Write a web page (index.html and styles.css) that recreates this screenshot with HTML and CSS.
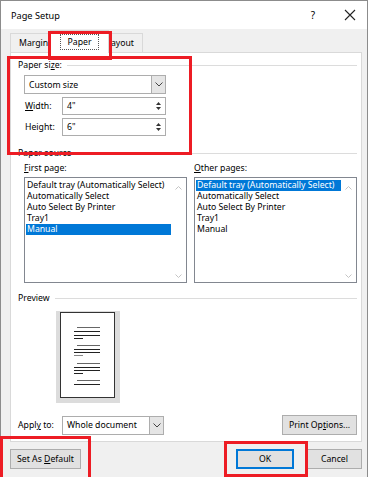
FILE: index.html
```html
<!DOCTYPE html>
<html>
<head>
<meta charset="utf-8">
<link rel="stylesheet" href="styles.css">
</head>
<body>
<div class="dialog">
  <div class="titlebar">
    <span class="title">Page Setup</span>
    <span class="help">?</span>
    <svg class="close" width="12" height="12" viewBox="0 0 12 12"><path d="M1 1L11 11M11 1L1 11" stroke="#222" stroke-width="1.1" fill="none"/></svg>
  </div>
  <div class="tabs">
    <div class="tab tab-margins">Margins</div>
    <div class="tab tab-paper"><span class="focus">Paper</span></div>
    <div class="tab tab-layout">Layout</div>
  </div>
  <div class="panel">
    <div class="group-head"><span>Paper si<u>z</u>e:</span><i></i></div>
    <div class="combo combo-size"><span>Custom size</span><b class="drop"><svg width="8" height="5" viewBox="0 0 8 5"><path d="M0.5 0.5L4 4L7.5 0.5" stroke="#444" fill="none"/></svg></b></div>
    <div class="field-row">
      <label><u>W</u>idth:</label>
      <div class="spin"><span>4"</span><b class="arrows"><svg width="5" height="3" viewBox="0 0 5 3"><path d="M0 3L2.5 0L5 3Z" fill="#333"/></svg><svg width="5" height="3" viewBox="0 0 5 3"><path d="M0 0L2.5 3L5 0Z" fill="#333"/></svg></b></div>
    </div>
    <div class="field-row">
      <label>Hei<u>g</u>ht:</label>
      <div class="spin"><span>6"</span><b class="arrows"><svg width="5" height="3" viewBox="0 0 5 3"><path d="M0 3L2.5 0L5 3Z" fill="#333"/></svg><svg width="5" height="3" viewBox="0 0 5 3"><path d="M0 0L2.5 3L5 0Z" fill="#333"/></svg></b></div>
    </div>
    <div class="group-head source-head"><span>Paper source</span><i></i></div>
    <div class="lists">
      <div class="list-col">
        <div class="list-label"><u>F</u>irst page:</div>
        <div class="listbox">
          <div class="items">
            <div>Default tray (Automatically Select)</div>
            <div>Automatically Select</div>
            <div>Auto Select By Printer</div>
            <div>Tray1</div>
            <div class="sel">Manual</div>
          </div>
          <div class="vscroll"><svg width="7" height="4" viewBox="0 0 7 4"><path d="M0.5 3.5L3.5 0.5L6.5 3.5" stroke="#c4c4c4" fill="none"/></svg><svg width="7" height="4" viewBox="0 0 7 4"><path d="M0.5 0.5L3.5 3.5L6.5 0.5" stroke="#c4c4c4" fill="none"/></svg></div>
        </div>
      </div>
      <div class="list-col">
        <div class="list-label"><u>O</u>ther pages:</div>
        <div class="listbox">
          <div class="items">
            <div class="sel">Default tray (Automatically Select)</div>
            <div>Automatically Select</div>
            <div>Auto Select By Printer</div>
            <div>Tray1</div>
            <div>Manual</div>
          </div>
          <div class="vscroll"><svg width="7" height="4" viewBox="0 0 7 4"><path d="M0.5 3.5L3.5 0.5L6.5 3.5" stroke="#c4c4c4" fill="none"/></svg><svg width="7" height="4" viewBox="0 0 7 4"><path d="M0.5 0.5L3.5 3.5L6.5 0.5" stroke="#c4c4c4" fill="none"/></svg></div>
        </div>
      </div>
    </div>
    <div class="group-head preview-head"><span>Preview</span><i></i></div>
    <div class="preview">
      <div class="page">
        <i class="l1 first"></i><i class="l2"></i><i class="l2"></i><i class="l3 s3"></i>
        <i class="l1 gap"></i><i class="l2"></i><i class="l2 s3"></i><i class="l3 s3 grey"></i>
        <i class="l1 gap2"></i><i class="l2"></i><i class="l2 s3"></i><i class="l3 s3"></i>
        <i class="l1 gap"></i><i class="l2"></i>
      </div>
    </div>
    <div class="apply-row">
      <label>Appl<u>y</u> to:</label>
      <div class="combo combo-apply"><span>Whole document</span><b class="drop"><svg width="8" height="5" viewBox="0 0 8 5"><path d="M0.5 0.5L4 4L7.5 0.5" stroke="#444" fill="none"/></svg></b></div>
      <button class="btn btn-print">Print Op<u>t</u>ions...</button>
    </div>
  </div>
  <div class="footer">
    <button class="btn btn-default">Set As <u>D</u>efault</button>
    <button class="btn btn-ok">OK</button>
    <button class="btn btn-cancel">Cancel</button>
  </div>
  <div class="mark mark-tab"></div>
  <div class="mark mark-size"></div>
  <div class="mark mark-default"></div>
  <div class="mark mark-ok"></div>
</div>
</body>
</html>
```

FILE: styles.css
```css
* { box-sizing: border-box; }
html, body { margin: 0; padding: 0; background: #fff; }
body {
  font-family: "Noto Sans", "DejaVu Sans", sans-serif;
  font-size: 8.7px;
  color: #000;
  width: 375px;
  height: 477px;
  overflow: hidden;
}
u { text-decoration: underline; text-underline-offset: 1px; }
.dialog {
  position: relative;
  width: 368px;
  height: 477px;
  background: #f0f0f0;
  border: 1px solid #8c8c8c;
  border-bottom: none;
}
.titlebar {
  height: 28px;
  background: #fff;
  display: flex;
  align-items: center;
  padding-left: 10px;
}
.title { font-size: 9.2px; flex: 1; }
.help { font-size: 10px; margin-right: 29px; }
.close { margin-right: 11px; }
.tabs {
  display: flex;
  align-items: flex-end;
  height: 23px;
  margin-left: 9px;
  padding-top: 2px;
}
.tab {
  height: 19px;
  border: 1px solid #d9d9d9;
  border-bottom: none;
  background: #f0f0f0;
  display: flex;
  align-items: center;
  padding: 0 6px;
  overflow: hidden;
  white-space: nowrap;
}
.tab-margins { width: 42px; padding-left: 8px; }
.tab-paper {
  height: 23px;
  width: 59px;
  margin: 0 -2px 0 -2px;
  background: #fff;
  position: relative;
  z-index: 1;
  justify-content: center;
  margin-bottom: -1px;
}
.tab-layout { width: 36px; padding-left: 0; justify-content: flex-end; padding-right: 8px; }
.focus { border: 1px dotted #555; padding: 1px 7px; line-height: 12px; }
.panel {
  background: #fff;
  border: 1px solid #d9d9d9;
  margin: 0 5px 0 9px;
  height: 390px;
  padding: 6px 4px 0 7px;
}
.group-head {
  display: flex;
  align-items: center;
  height: 12px;
  gap: 5px;
}
.group-head i { flex: 1; border-top: 1px solid #dcdcdc; height: 0; }
.combo {
  display: flex;
  align-items: center;
  height: 19px;
  border: 1px solid #adadad;
  background: #fff;
  padding-left: 4px;
}
.combo span { flex: 1; }
.drop {
  width: 14px;
  align-self: stretch;
  background: #e5e5e5;
  border-left: 1px solid #adadad;
  display: flex;
  align-items: center;
  justify-content: center;
}
.combo-size { width: 142px; margin: 4px 0 0 6px; }
.field-row {
  display: flex;
  align-items: center;
  margin: 3px 0 0 7px;
}
.field-row label { width: 37px; }
.spin {
  width: 104px;
  height: 18px;
  border: 1px solid #adadad;
  display: flex;
  align-items: center;
  padding-left: 4px;
}
.spin span { flex: 1; }
.arrows {
  width: 13px;
  align-self: stretch;
  display: flex;
  flex-direction: column;
  align-items: center;
  justify-content: center;
  gap: 2px;
}
.source-head { margin-top: 11px; }
.lists {
  display: flex;
  gap: 7px;
  margin: 4px 0 0 6px;
}
.list-col { width: 163px; }
.list-label { height: 11px; line-height: 11px; margin-bottom: 3px; }
.listbox {
  height: 106px;
  border: 1px solid #828790;
  display: flex;
  padding: 2px 1px 0 1px;
}
.items { flex: 1; line-height: 11px; white-space: nowrap; }
.items div { padding-left: 1px; height: 11px; }
.items .sel { background: #0078d7; color: #fff; }
.vscroll {
  width: 14px;
  display: flex;
  flex-direction: column;
  justify-content: space-between;
  align-items: center;
  padding: 6px 0 4px;
}
.preview-head { margin-top: 9px; }
.preview {
  margin: 7px 0 0 38px;
  width: 64px;
  height: 92px;
  background: #dcdcdc;
  padding: 1px 5px 5px 4px;
}
.page {
  width: 55px;
  height: 86px;
  background: #fff;
  border: 1px solid #333;
  padding: 0 0 0 13px;
  display: flex;
  flex-direction: column;
}
.page i { display: block; height: 1px; background: #222; margin-top: 3px; }
.page .first { margin-top: 14px; }
.page .l1 { width: 23px; margin-left: 3px; background: #666; }
.page .l2 { width: 26px; }
.page .l3 { width: 9px; }
.page .s3 { margin-top: 2px; }
.page .grey { background: #888; }
.page .gap { margin-top: 6px; }
.page .gap2 { margin-top: 7px; }
.apply-row {
  display: flex;
  align-items: center;
  margin-top: 12px;
}
.apply-row label { width: 44px; }
.combo-apply { width: 102px; height: 19px; }
.btn {
  font-family: inherit;
  font-size: 8.7px;
  background: #e1e1e1;
  border: 1px solid #adadad;
  height: 20px;
  padding: 0;
  color: #000;
}
.btn-print { margin-left: auto; width: 75px; }
.footer {
  display: flex;
  align-items: center;
  padding: 7px 5px 0 9px;
}
.btn-default { width: 71px; }
.btn-ok { width: 58px; margin-left: auto; border: 1px solid #0078d7; box-shadow: inset 0 0 0 1px #0078d7; }
.btn-cancel { width: 55px; margin-left: 13px; }
.mark { position: absolute; border: 3px solid #ed1c24; z-index: 5; }
.mark-tab { left: 47px; top: 30px; width: 64px; height: 29px; }
.mark-size { left: 6px; top: 55px; width: 185px; height: 99px; }
.mark-default { left: -1px; top: 435px; width: 91px; height: 50px; }
.mark-ok { left: 223px; top: 440px; width: 84px; height: 36px; }
```
